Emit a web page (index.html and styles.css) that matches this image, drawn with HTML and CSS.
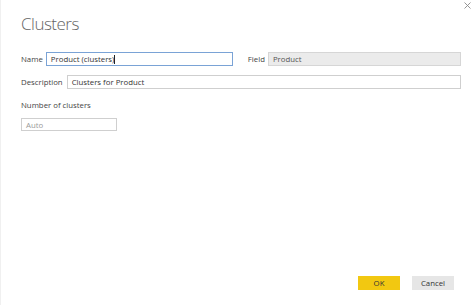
FILE: index.html
```html
<!DOCTYPE html>
<html lang="en">
<head>
<meta charset="utf-8">
<title>Clusters</title>
<link rel="stylesheet" href="styles.css">
</head>
<body>
<div class="dialog">
  <button class="close" aria-label="Close">
    <svg width="7" height="7" viewBox="0 0 7 7"><path d="M0.5 0.5 L6.5 6.5 M6.5 0.5 L0.5 6.5" stroke="#8a8a8a" stroke-width="0.9" fill="none"/></svg>
  </button>
  <h1 class="title">Clusters</h1>
  <div class="row">
    <label class="label">Name</label>
    <div class="input name-input focused">Product (clusters)<span class="caret"></span></div>
    <label class="label field-label">Field</label>
    <div class="input field-input disabled">Product</div>
  </div>
  <div class="row row-desc">
    <label class="label">Description</label>
    <div class="input desc-input">Clusters for Product</div>
  </div>
  <div class="label count-label">Number of clusters</div>
  <div class="input auto-input placeholder">Auto</div>
  <div class="actions">
    <button class="btn btn-ok">OK</button>
    <button class="btn btn-cancel">Cancel</button>
  </div>
</div>
</body>
</html>
```
FILE: styles.css
```css
html, body {
  margin: 0;
  padding: 0;
  background: #ffffff;
}
body {
  width: 474px;
  height: 305px;
  overflow: hidden;
  font-family: "Open Sans", "Noto Sans", sans-serif;
}
.dialog {
  position: relative;
  box-sizing: border-box;
  height: 305px;
  padding: 12px 13px 15px 20px;
  display: flex;
  flex-direction: column;
  border-left: 1px solid #f0f0f0;
}
.close {
  position: absolute;
  top: 2px;
  right: 3px;
  border: 0;
  background: none;
  padding: 0;
  width: 7px;
  height: 7px;
  display: flex;
}
.title {
  margin: 0;
  font-size: 17px;
  line-height: 24px;
  font-weight: 300;
  letter-spacing: -0.5px;
  color: #666666;
}
.row {
  display: flex;
  align-items: center;
  margin-top: 16px;
  height: 14px;
}
.row-desc {
  margin-top: 9px;
}
.label {
  font-size: 7.8px;
  line-height: 12px;
  color: #444444;
  white-space: nowrap;
}
.input {
  box-sizing: border-box;
  height: 14px;
  border: 1px solid #cfcfcf;
  font-size: 7.8px;
  line-height: 12px;
  color: #333333;
  padding: 0 4px;
  white-space: nowrap;
  display: flex;
  align-items: center;
}
.name-input {
  width: 187px;
  margin-left: 3px;
}
.focused {
  border-color: #7aa3d6;
}
.caret {
  display: inline-block;
  width: 1px;
  height: 9px;
  background: #222;
}
.field-label {
  margin-left: 15px;
}
.field-input {
  width: 193px;
  margin-left: 3px;
}
.disabled {
  background: #ebebeb;
  border-color: #d6d6d6;
  color: #555555;
}
.desc-input {
  flex: 1;
  margin-left: 4px;
}
.count-label {
  margin-top: 10px;
}
.auto-input {
  width: 96px;
  margin-top: 7px;
  height: 13px;
}
.placeholder {
  color: #9a9a9a;
}
.actions {
  margin-top: auto;
  display: flex;
  justify-content: flex-end;
  gap: 12px;
  padding-right: 7px;
}
.btn {
  width: 42px;
  height: 14px;
  border: 0;
  padding: 0;
  font-family: "Open Sans", "Noto Sans", sans-serif;
  font-size: 7.8px;
  color: #333333;
}
.btn-ok {
  background: #f2c811;
}
.btn-cancel {
  background: #e6e6e6;
}
```
